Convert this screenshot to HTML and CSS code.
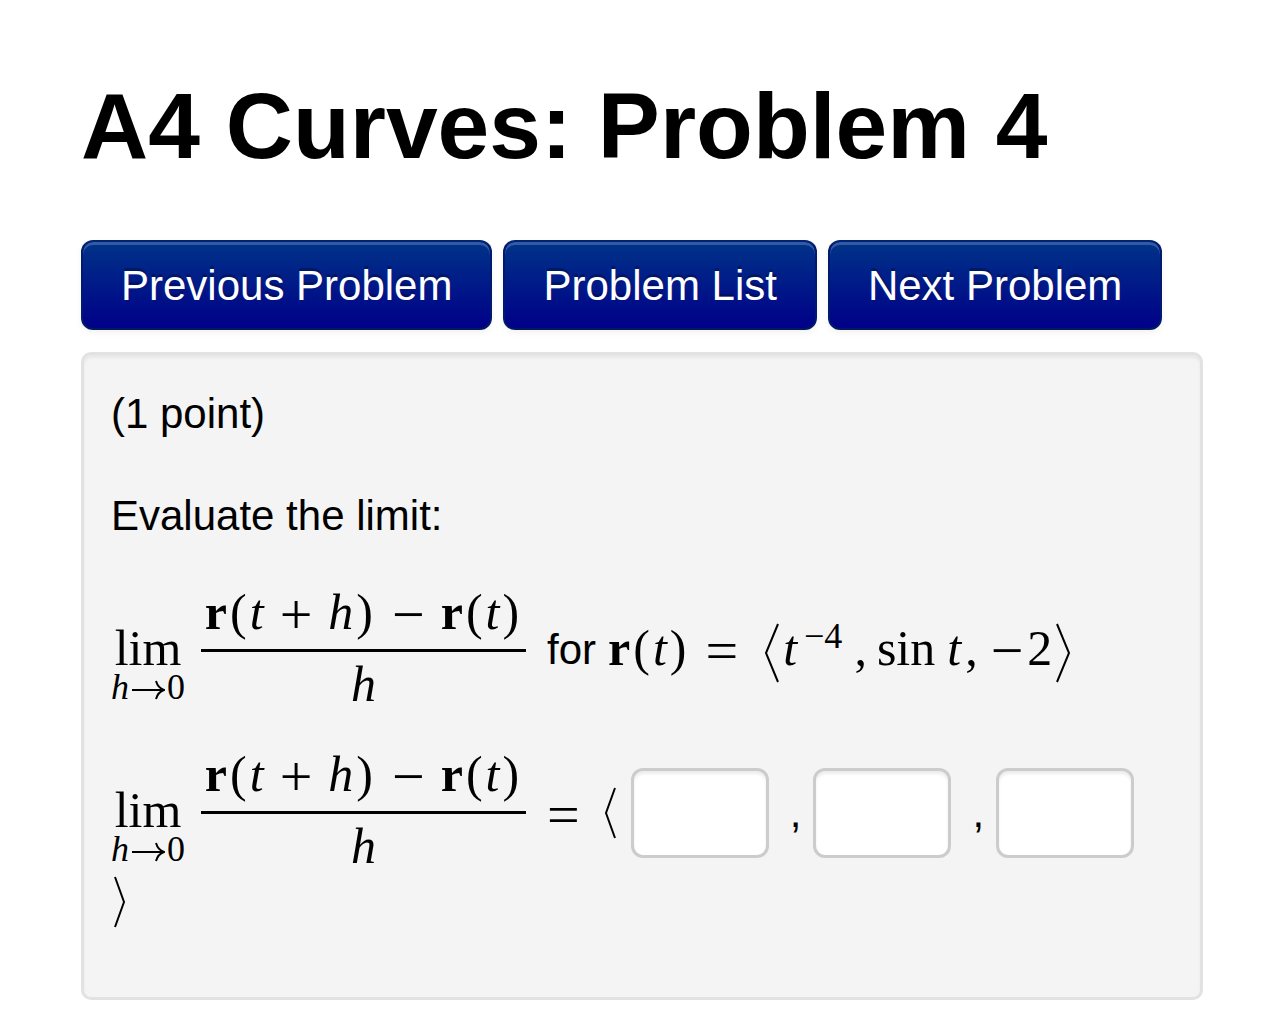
FILE: index.html
```html
<!DOCTYPE html>
<html lang="en">
<head>
    <meta charset="UTF-8">
    <meta name="viewport" content="width=device-width, initial-scale=1.0">
    <title>A4 Curves: Problem 4</title>
    <link rel="stylesheet" href="styles.css">
</head>
<body>

<h1>A4 Curves: Problem 4</h1>

<nav class="problem-nav">
    <a href="#previous" class="nav-button">Previous Problem</a>
    <a href="#list" class="nav-button">Problem List</a>
    <a href="#next" class="nav-button">Next Problem</a>
</nav>

<form class="problem">
    <p class="points">(1 point)</p>
    <p class="prompt">Evaluate the limit:</p>

    <div class="line">
        <div class="limit">
            <span class="lim">lim</span>
            <span class="under"><i>h</i><svg class="arrow" viewBox="0 0 34 20"><path d="M1 10H32M25 1Q27 8 33 10Q27 12 25 19"/></svg>0</span>
        </div>
        <div class="fraction">
            <span class="top"><b>r</b><span class="paren">(</span><i>t</i><span class="op">+</span><i>h</i><span class="paren">)</span><span class="op">−</span><b>r</b><span class="paren">(</span><i>t</i><span class="paren">)</span></span>
            <span class="bottom"><i>h</i></span>
        </div>
        <span class="word">for</span>
        <div class="math"><b>r</b><span class="paren">(</span><i>t</i><span class="paren">)</span><span class="equals">=</span><svg class="angle" viewBox="0 0 16 60"><path d="M14 1L2 30L14 59"/></svg><i>t</i><sup>−4</sup><span class="comma">,</span>sin<i class="arg">t</i><span class="comma">,</span><span class="minus">−</span>2<svg class="angle" viewBox="0 0 16 60"><path d="M2 1L14 30L2 59"/></svg></div>
    </div>

    <div class="line">
        <div class="limit">
            <span class="lim">lim</span>
            <span class="under"><i>h</i><svg class="arrow" viewBox="0 0 34 20"><path d="M1 10H32M25 1Q27 8 33 10Q27 12 25 19"/></svg>0</span>
        </div>
        <div class="fraction">
            <span class="top"><b>r</b><span class="paren">(</span><i>t</i><span class="op">+</span><i>h</i><span class="paren">)</span><span class="op">−</span><b>r</b><span class="paren">(</span><i>t</i><span class="paren">)</span></span>
            <span class="bottom"><i>h</i></span>
        </div>
        <div class="math"><span class="equals">=</span></div>
        <div class="vector">
            <svg class="angle-small" viewBox="0 0 16 52"><path d="M12 1L3 26L12 51"/></svg>
            <input type="text" aria-label="answer 1">
            <span class="separator">,</span>
            <input type="text" aria-label="answer 2">
            <span class="separator">,</span>
            <input type="text" aria-label="answer 3">
        </div>
    </div>
    <svg class="angle-small closing" viewBox="0 0 16 52"><path d="M4 1L13 26L4 51"/></svg>
</form>

</body>
</html>
```

FILE: styles.css
```css
* {
    box-sizing: border-box;
}
body {
    margin: 0;
    padding: 72px 81px 12px;
    background-color: #fff;
    color: #000;
    font-family: "Liberation Sans", Arial, sans-serif;
    font-size: 42px;
}
h1 {
    margin: 0 0 60px;
    font-size: 93px;
    line-height: 108px;
}
.problem-nav {
    display: flex;
    gap: 11px;
    margin-bottom: 22px;
}
.nav-button {
    height: 90px;
    padding: 0 38px;
    border: 2px solid;
    border-color: #002277 #001a70 #001a60;
    border-radius: 12px;
    background: linear-gradient(#003388, #000088);
    box-shadow: inset 0 3px 0 rgba(255, 255, 255, 0.2), 0 3px 6px rgba(0, 0, 0, 0.05);
    color: #fff;
    line-height: 88px;
    text-decoration: none;
    text-shadow: 0 -3px 0 rgba(0, 0, 0, 0.25);
    white-space: nowrap;
}
.problem {
    padding: 29px 27px 69px;
    border: 3px solid #e2e2e2;
    border-radius: 10px;
    background-color: #f4f4f4;
    box-shadow: inset 0 3px 3px rgba(0, 0, 0, 0.05);
}
.points,
.prompt {
    margin: 0;
    line-height: 60px;
}
.prompt {
    margin: 42px 0 36px;
}

/* formulas */
.line {
    display: flex;
    align-items: center;
}
.line + .line {
    margin-top: 30px;
}
.limit,
.fraction,
.math {
    flex: none;
    font-family: "Liberation Serif", "Times New Roman", serif;
    font-size: 50px;
    line-height: 60px;
    white-space: nowrap;
}
.math {
    padding-top: 4px;
}
.limit {
    display: flex;
    flex-direction: column;
    align-items: center;
    width: 74px;
    padding-top: 30px;
}
.lim {
    line-height: 48px;
}
.under {
    font-size: 36px;
    line-height: 30px;
}
.fraction {
    display: flex;
    flex-direction: column;
    width: 325px;
    margin: 0 21px 0 16px;
    text-align: center;
}
.top {
    padding-bottom: 7px;
    border-bottom: 3px solid #000;
}
.bottom {
    padding-top: 2px;
}
.paren {
    margin: 0 3px;
}
.op,
.equals,
.minus {
    font-size: 58px;
    line-height: 0;
    vertical-align: -5px;
}
.op {
    margin: 0 16px;
}
.equals {
    margin: 0 23px 0 16px;
}
.equals:first-child {
    margin-left: 0;
}
.word {
    padding-top: 3px;
    margin-right: 12px;
}
sup {
    margin: 0 12px 0 7px;
    font-size: 36px;
    line-height: 0;
    vertical-align: 17px;
}
.comma {
    margin-right: 10px;
}
.arg {
    margin: 0 4px 0 12px;
}
.minus {
    margin: 0 4px 0 3px;
}
svg {
    fill: none;
    stroke: #000;
    stroke-width: 2;
}
.arrow {
    width: 34px;
    height: 20px;
    margin: 0 2px;
    vertical-align: -1px;
}
.angle {
    width: 16px;
    height: 60px;
    margin: 0 3px;
    vertical-align: -18px;
}
.angle-small {
    flex: none;
    width: 16px;
    height: 52px;
}
.closing {
    display: block;
}

/* answer boxes */
.vector {
    display: flex;
    align-items: center;
    padding-top: 6px;
}
.vector .angle-small {
    margin-right: 12px;
}
.vector input {
    width: 138px;
    height: 90px;
    padding: 12px 18px;
    border: 3px solid #ccc;
    border-radius: 12px;
    background-color: #fff;
    box-shadow: inset 0 3px 3px rgba(0, 0, 0, 0.075);
    font: inherit;
}
.separator {
    padding: 0 12px 0 21px;
}
```
